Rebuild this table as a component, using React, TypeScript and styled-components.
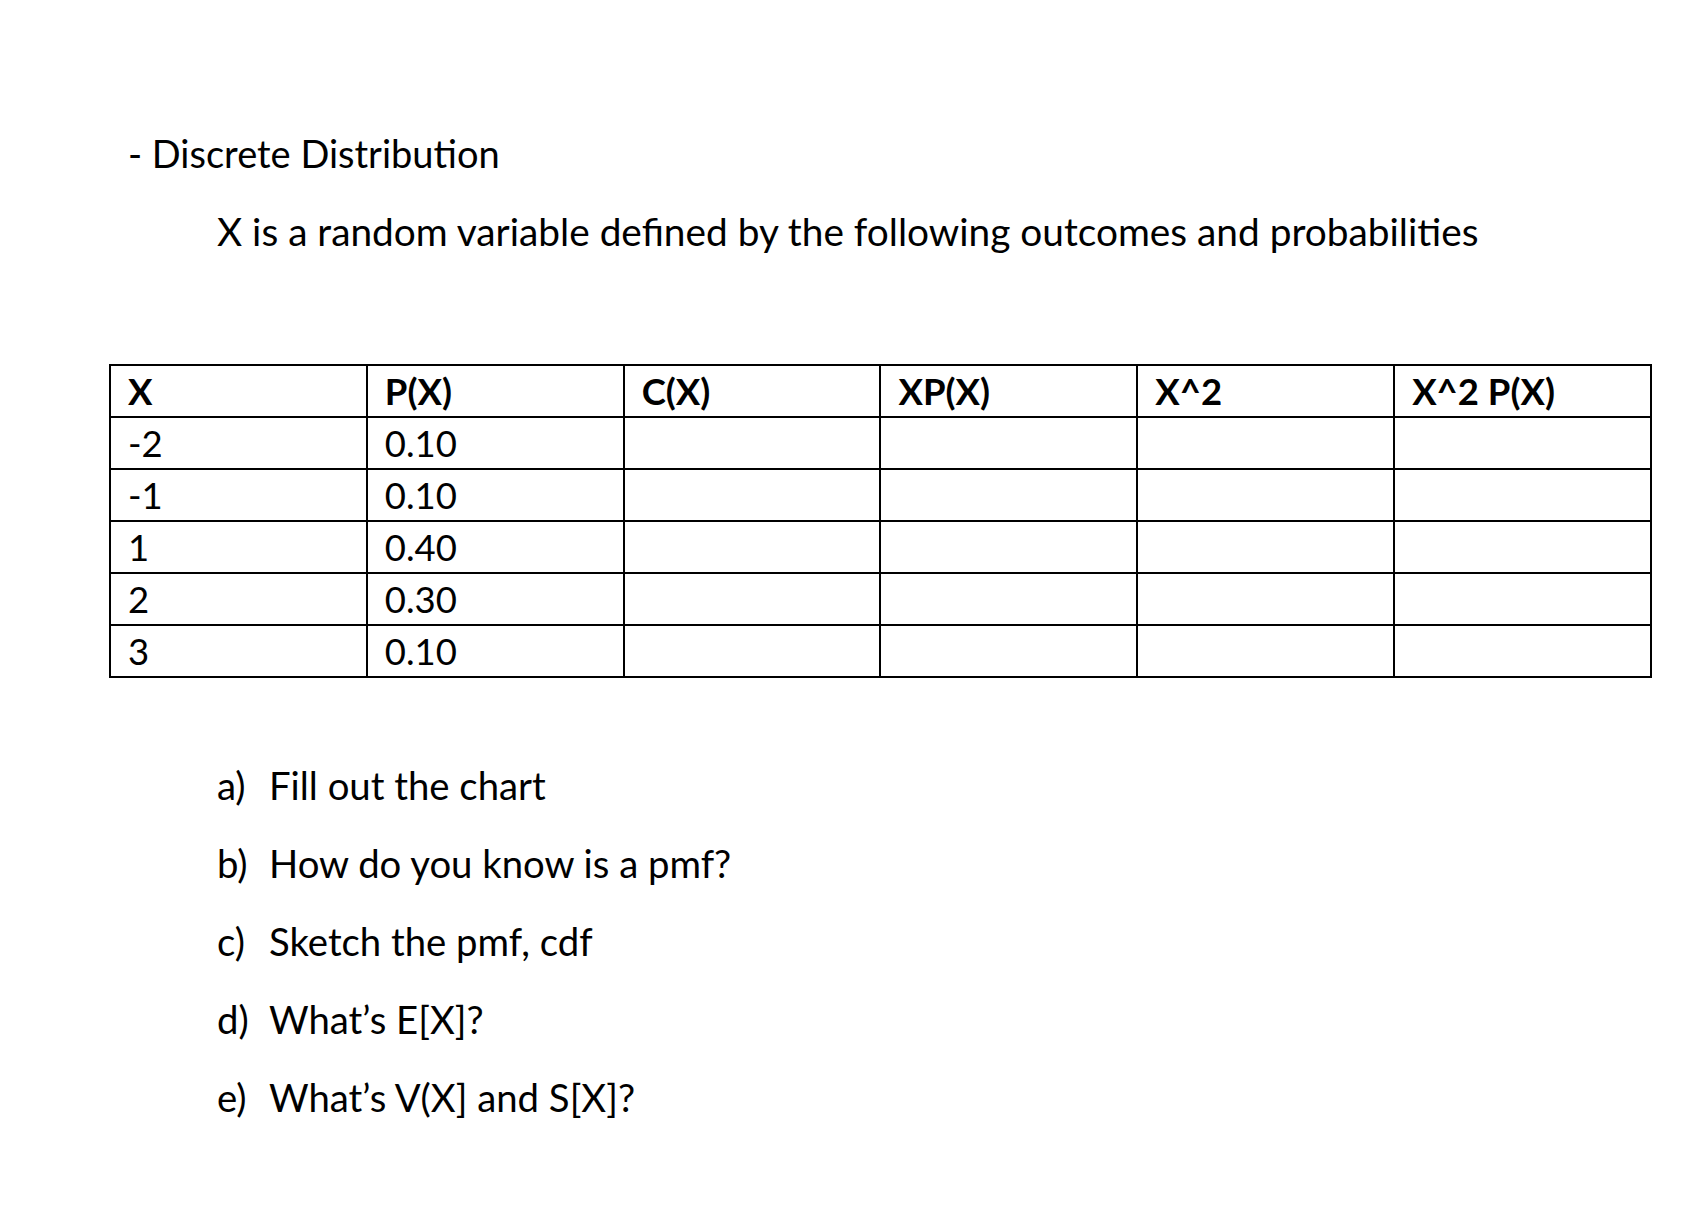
import React from 'react'
import styled, { createGlobalStyle } from 'styled-components'

const GlobalStyle = createGlobalStyle`
  html, body {
    margin: 0;
    padding: 0;
    background: #ffffff;
  }
  body {
    font-family: Lato, "Open Sans", "Liberation Sans", sans-serif;
    color: #000000;
  }
`

const headers = ['X', 'P(X)', 'C(X)', 'XP(X)', 'X^2', 'X^2 P(X)']

const rows = [
  ['-2', '0.10'],
  ['-1', '0.10'],
  ['1', '0.40'],
  ['2', '0.30'],
  ['3', '0.10'],
]

const questions = [
  ['a)', 'Fill out the chart'],
  ['b)', 'How do you know is a pmf?'],
  ['c)', 'Sketch the pmf, cdf'],
  ['d)', 'What’s E[X]?'],
  ['e)', 'What’s V(X] and S[X]?'],
]

const App = () => {
  return (
    <Page>
      <GlobalStyle />
      <Heading>- Discrete Distribution</Heading>
      <Intro>
        X is a random variable defined by the following outcomes and
        probabilities
      </Intro>
      <Chart>
        <thead>
          <tr>
            {headers.map((h) => (
              <HeadCell key={h}>{h}</HeadCell>
            ))}
          </tr>
        </thead>
        <tbody>
          {rows.map((r) => (
            <tr key={r[0]}>
              {headers.map((h, i) => (
                <Cell key={h}>{r[i] || ''}</Cell>
              ))}
            </tr>
          ))}
        </tbody>
      </Chart>
      <Questions>
        {questions.map(([label, text]) => (
          <Question key={label}>
            <QuestionLabel>{label}</QuestionLabel>
            <span>{text}</span>
          </Question>
        ))}
      </Questions>
    </Page>
  )
}

const Page = styled.div`
  width: 1698px;
  height: 1208px;
  padding: 130px 0 0 109px;
  box-sizing: border-box;
`

const Heading = styled.h1`
  margin: 0 0 0 19px;
  font-size: 38px;
  font-weight: 400;
  line-height: 46px;
`

const Intro = styled.p`
  margin: 32px 0 0 108px;
  font-size: 38.8px;
  line-height: 46px;
`

const Chart = styled.table`
  margin-top: 110px;
  width: 1543px;
  border-collapse: collapse;
  table-layout: fixed;
  border: 2px solid #000;
`

const HeadCell = styled.th`
  height: 50px;
  padding: 0 0 0 17px;
  border: 2px solid #000;
  text-align: left;
  font-size: 36.5px;
  font-weight: 700;
  line-height: 1;
`

const Cell = styled.td`
  height: 50px;
  padding: 0 0 0 17px;
  border: 2px solid #000;
  font-size: 36.5px;
  font-weight: 400;
  line-height: 1;
`

const Questions = styled.ol`
  list-style: none;
  margin: 84px 0 0 108px;
  padding: 0;
  display: flex;
  flex-direction: column;
  gap: 32px;
`

const Question = styled.li`
  display: flex;
  font-size: 38.3px;
  line-height: 46px;
`

const QuestionLabel = styled.span`
  width: 52px;
  flex: none;
`

export default App
